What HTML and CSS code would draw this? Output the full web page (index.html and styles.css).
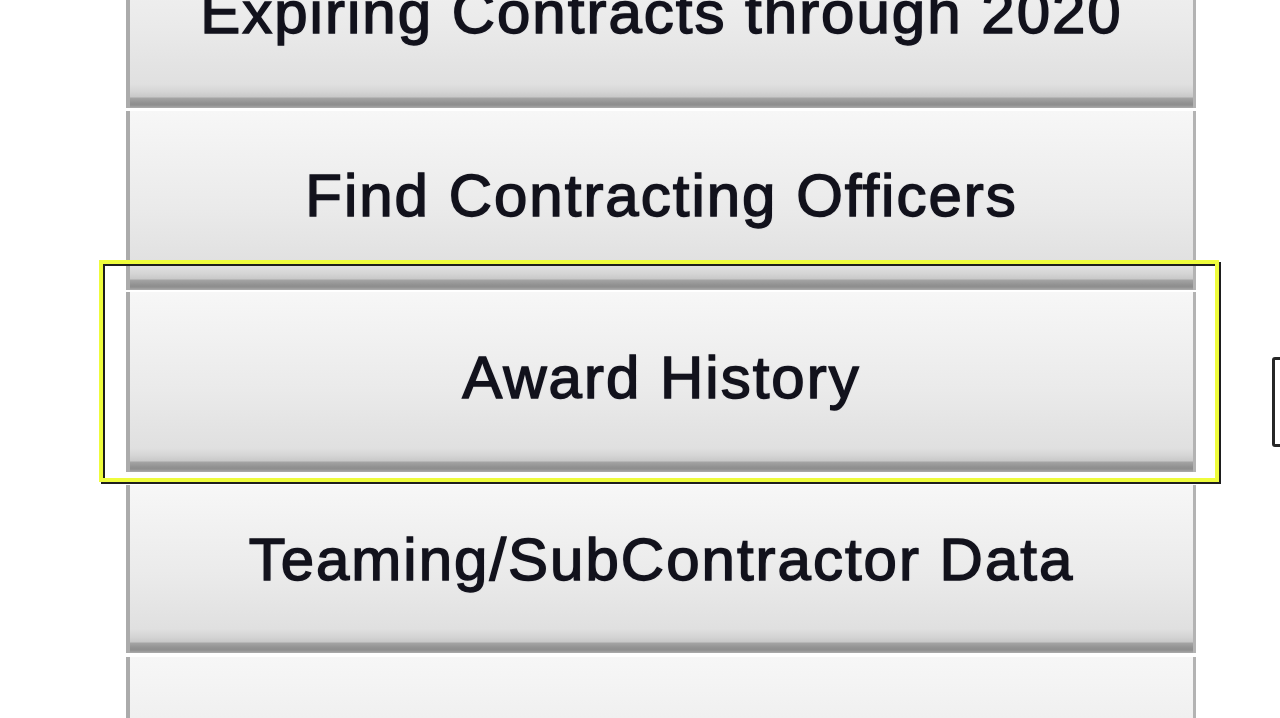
FILE: index.html
```html
<!DOCTYPE html>
<html lang="en">
<head>
<meta charset="utf-8">
<title>Menu</title>
<link rel="stylesheet" href="styles.css">
</head>
<body>
  <div class="stack">
    <div class="btn btn-1"><span class="label">Expiring Contracts through 2020</span></div>
    <div class="btn btn-2"><span class="label">Find Contracting Officers</span></div>
    <div class="btn btn-3"><span class="label">Award History</span><div class="highlight"></div></div>
    <div class="btn btn-4"><span class="label">Teaming/SubContractor Data</span></div>
    <div class="btn btn-5"><span class="label"></span></div>
  </div>
  <div class="side-box"></div>
</body>
</html>
```

FILE: styles.css
```css
html, body {
  margin: 0;
  padding: 0;
  background: #ffffff;
  overflow: hidden;
  height: 718px;
}

body {
  font-family: "Liberation Sans", Arial, sans-serif;
}

.stack {
  position: relative;
  margin-top: -73px;
  margin-left: 126px;
  width: 1070px;
  display: flex;
  flex-direction: column;
}

.btn {
  position: relative;
  box-sizing: border-box;
  display: flex;
  align-items: center;
  justify-content: center;
  padding-bottom: 9px;
  border-left: 4px solid #ababab;
  border-right: 3px solid #b3b3b3;
  background: linear-gradient(to bottom,
    #f7f7f7 0%,
    #f1f1f1 25%,
    #eaeaea 55%,
    #e0e0e0 calc(100% - 24px),
    #d4d4d4 calc(100% - 16px),
    #c8c8c8 calc(100% - 11px),
    #a4a4a4 calc(100% - 10px),
    #919191 calc(100% - 5px),
    #8e8e8e calc(100% - 3px),
    #acacac 100%);
}

.label {
  font-size: 60px;
  line-height: 60px;
  letter-spacing: 2px;
  color: #12121c;
  -webkit-text-stroke: 1.4px #12121c;
  text-shadow: 0 0 1.5px rgba(20, 20, 40, 0.55);
  white-space: nowrap;
}

.btn-1 { height: 181px; }
.btn-2 { height: 179px; margin-top: 3px; }
.btn-3 { height: 180px; margin-top: 2px; }
.btn-4 { height: 168px; margin-top: 13px; padding-bottom: 19px; }
.btn-5 { height: 200px; margin-top: 4px; }

.highlight {
  position: absolute;
  left: -31px;
  top: -32px;
  width: 1120px;
  height: 222px;
  box-sizing: border-box;
  border: 4px solid #eefc3c;
  box-shadow: 2px 2px 0 #1e1e1e, inset 2px 2px 0 #1e1e1e;
  pointer-events: none;
}

.side-box {
  position: absolute;
  left: 1272px;
  top: 357px;
  width: 30px;
  height: 90px;
  box-sizing: border-box;
  border: 3px solid #262626;
  border-radius: 3px;
}
```
